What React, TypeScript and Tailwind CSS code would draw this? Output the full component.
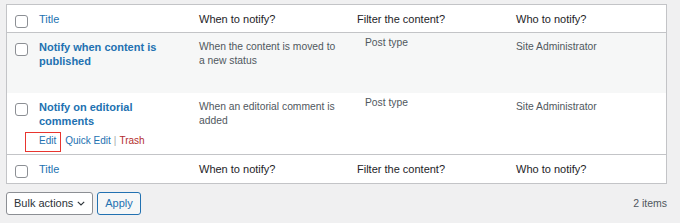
import React from "react";

const Checkbox: React.FC = () => (
  <span className="block h-[13px] w-[13px] rounded-[3px] border border-[#8c8f94] bg-white" />
);

const HeaderRow: React.FC<{ top?: boolean }> = ({ top }) => (
  <div
    className={
      "grid grid-cols-[32px_160px_158px_159px_1fr] text-[11px] leading-[15px] text-[#1d2327] " +
      (top ? "h-[28px] border-b border-[#c3c4c7]" : "h-[29px] border-t border-[#c3c4c7]")
    }
  >
    <div className="pl-[8px] pt-[10px]">
      <Checkbox />
    </div>
    <div className="pt-[7px] text-[#2271b1]">Title</div>
    <div className="pt-[7px]">When to notify?</div>
    <div className="pt-[7px]">Filter the content?</div>
    <div className="pt-[7px]">Who to notify?</div>
  </div>
);

type Row = {
  title: string;
  when: string;
  actions?: boolean;
  bg: string;
  height: string;
};

const rows: Row[] = [
  {
    title: "Notify when content is published",
    when: "When the content is moved to a new status",
    bg: "bg-[#f6f7f7]",
    height: "h-[60px]",
  },
  {
    title: "Notify on editorial comments",
    when: "When an editorial comment is added",
    actions: true,
    bg: "bg-white",
    height: "h-[61px]",
  },
];

const DataRow: React.FC<{ row: Row }> = ({ row }) => (
  <div
    className={`grid grid-cols-[32px_160px_158px_159px_1fr] ${row.bg} ${row.height} text-[10.3px] leading-[14px] text-[#50575e]`}
  >
    <div className="pl-[8px] pt-[10px]">
      <Checkbox />
    </div>
    <div className="pr-[12px] pt-[7px]">
      <div className="text-[11px] font-bold text-[#2271b1]">{row.title}</div>
      {row.actions && (
        <div className="mt-[5px] text-[10px] leading-[15px]">
          <span className="relative text-[#2271b1]">
            Edit
            {/* annotation box drawn over the link */}
            <span className="absolute -left-[14px] -top-[3px] h-[20px] w-[36px] border border-[#e8352f]" />
          </span>
          <span className="ml-[9px] text-[#2271b1]">Quick Edit</span>
          <span className="mx-[3px] text-[#a7aaad]">|</span>
          <span className="text-[#b32d2e]">Trash</span>
        </div>
      )}
    </div>
    <div className="pr-[16px] pt-[7px]">{row.when}</div>
    <div className="pl-[8px] pt-[3px]">Post type</div>
    <div className="pt-[7px]">Site Administrator</div>
  </div>
);

const App: React.FC = () => {
  return (
    <div
      className="h-[223px] w-[680px] bg-[#f0f0f1] pl-[6px] pr-[13px] pt-[4px]"
      style={{ fontFamily: '"Liberation Sans", Arial, sans-serif' }}
    >
      <div className="border border-[#c3c4c7] bg-white">
        <HeaderRow top />
        {rows.map((row) => (
          <DataRow key={row.title} row={row} />
        ))}
        <HeaderRow />
      </div>

      <div className="mt-[8px] flex items-center">
        <div className="flex h-[23px] w-[87px] items-center justify-between rounded-[3px] border border-[#8c8f94] bg-white pl-[7px] pr-[7px] text-[11px] text-[#2c3338]">
          <span>Bulk actions</span>
          <svg width="8" height="5" viewBox="0 0 8 5" fill="none">
            <path d="M0.8 0.8 L4 4 L7.2 0.8" stroke="#2c3338" strokeWidth="1.1" />
          </svg>
        </div>
        <button className="ml-[4px] flex h-[23px] w-[44px] items-center justify-center rounded-[3px] border border-[#2271b1] bg-[#f6f7f7] text-[11px] text-[#2271b1]">
          Apply
        </button>
        <div className="ml-auto text-[10.5px] text-[#50575e]">2 items</div>
      </div>
    </div>
  );
};

export default App;
